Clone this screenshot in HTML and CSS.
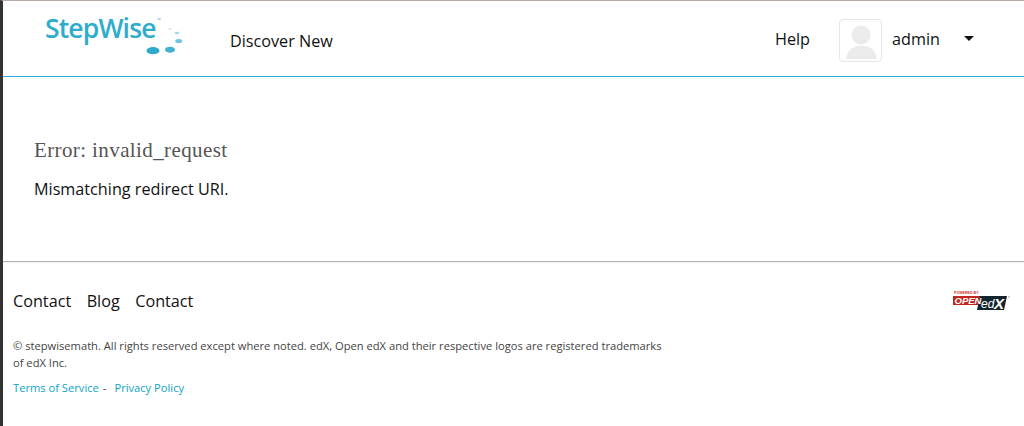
FILE: index.html
```html
<!DOCTYPE html>
<html lang="en">
<head>
<meta charset="utf-8">
<title>StepWise</title>
<link rel="stylesheet" href="styles.css">
</head>
<body>
<div class="page">
  <header class="site-header">
    <a class="logo" href="#">
      <span class="logo-text">StepWise</span><span class="logo-tm">™</span>
      <svg class="logo-dots" width="46" height="34" viewBox="0 0 46 34" aria-hidden="true">
        <ellipse cx="7" cy="23.700" rx="6.500" ry="3.600" fill="#2fa9c9"/>
        <ellipse cx="24" cy="22.700" rx="5" ry="3" fill="#3fb2cf"/>
        <ellipse cx="32.700" cy="14" rx="3.500" ry="2" fill="#6cc5da"/>
        <ellipse cx="31" cy="6" rx="2.300" ry="1.300" fill="#9ad8e6"/>
        <ellipse cx="24" cy="2" rx="1.500" ry="1" fill="#c8e9f1"/>
      </svg>
    </a>
    <nav class="main-nav"><a href="#">Discover New</a></nav>
    <div class="user-nav">
      <a class="help" href="#">Help</a>
      <span class="avatar">
        <svg width="41" height="41" viewBox="0 0 41 41" aria-hidden="true">
          <circle cx="21" cy="15" r="9.500" fill="#ebebeb"/>
          <path d="M6 39 C7 30 13 25.700 21.500 25.700 C30 25.700 36 30 37 39 Z" fill="#ebebeb"/>
        </svg>
      </span>
      <span class="username">admin</span>
      <span class="caret"></span>
    </div>
  </header>
  <main class="content">
    <h1 class="error-title">Error: invalid_request</h1>
    <p class="error-text">Mismatching redirect URI.</p>
  </main>
  <footer class="site-footer">
    <div class="footer-top">
      <nav class="footer-nav">
        <a href="#">Contact</a>
        <a href="#">Blog</a>
        <a href="#">Contact</a>
      </nav>
      <a class="openedx" href="#">
        <svg width="62" height="26" viewBox="0 0 62 26" role="img" aria-label="Powered by Open edX">
          <polygon points="3,9 31,9 29,18 3,18" fill="#c0281f"/>
          <polygon points="30,9 57,9 54,23 27,23" fill="#14242c"/>
          <text class="ox-powered" x="4" y="7">POWERED BY</text>
          <text class="ox-open" x="4.500" y="17">OPEN</text>
          <text class="ox-ed" x="31" y="20.500">ed</text>
          <text class="ox-x" x="44" y="21.500">X</text>
          <circle cx="59" cy="10" r="0.700" fill="#888"/>
        </svg>
      </a>
    </div>
    <p class="copyright">© stepwisemath. All rights reserved except where noted. edX, Open edX and their respective logos are registered trademarks of edX Inc.</p>
    <p class="legal"><a href="#">Terms of Service</a><span class="sep">-</span><a href="#">Privacy Policy</a></p>
  </footer>
</div>
</body>
</html>
```
FILE: styles.css
```css
* { box-sizing: border-box; }
html, body { margin: 0; height: 100%; background: #fff; }
body { font-family: "Open Sans", sans-serif; color: #000; overflow: hidden; }
a { color: inherit; text-decoration: none; }
.page { height: 426px; border-top: 1px solid #b5aaa5; border-left: 3px solid #333; }

.site-header { height: 76px; border-bottom: 1px solid #25b4d6; display: flex; align-items: flex-start; }
.logo { position: relative; width: 227px; flex: none; height: 60px; display: block; }
.logo-text { position: absolute; left: 42px; top: 9px; font-size: 26.500px; font-weight: 600; color: #2eaccd; line-height: 36px; letter-spacing: -0.85px; }
.logo-tm { position: absolute; left: 154px; top: 16px; font-size: 5px; line-height: 6px; color: #5ab; }
.logo-dots { position: absolute; left: 143px; top: 26px; }
.main-nav { margin-top: 29px; font-size: 16.200px; line-height: 22px; color: #111; }
.user-nav { margin-left: auto; height: 75px; display: flex; align-items: center; padding-right: 50px; font-size: 16.200px; color: #111; }
.help { margin-right: 29px; }
.avatar { width: 43px; height: 43px; margin-top: 4px; border: 1px solid #e6e6e6; border-radius: 4px; overflow: hidden; display: block; }
.avatar svg { display: block; }
.username { margin-left: 10px; width: 72px; }
.caret { width: 0; height: 0; border-left: 5px solid transparent; border-right: 5px solid transparent; border-top: 5px solid #111; }

.content { height: 185px; border-bottom: 1px solid #b5b5b5; box-shadow: 0 1px 0 #efefef; padding: 61px 31px 0; }
.error-title { margin: 0; font-family: "Liberation Serif", serif; font-weight: 400; font-size: 21px; line-height: 24px; letter-spacing: 0.39px; color: #555; }
.error-text { margin: 16px 0 0; font-size: 16.200px; line-height: 22px; color: #111; }

.site-footer { padding: 0 10px; }
.footer-top { height: 75px; display: flex; justify-content: space-between; align-items: flex-start; padding-top: 27px; }
.footer-nav { display: flex; gap: 15.500px; font-size: 16.200px; line-height: 24px; color: #111; }
.openedx { display: block; margin: -2px 2px 0 0; }
.openedx svg { display: block; }
.ox-powered { font-family: "Liberation Sans", sans-serif; font-size: 3.600px; font-weight: 700; fill: #c8372d; }
.ox-open { font-family: "Liberation Sans", sans-serif; font-size: 9.500px; font-weight: 700; font-style: italic; fill: #fff; }
.ox-ed { font-family: "Liberation Sans", sans-serif; font-size: 12px; font-style: italic; fill: #fff; }
.ox-x { font-family: "Liberation Sans", sans-serif; font-size: 15px; font-weight: 700; font-style: italic; fill: #fff; }
.copyright { margin: 0; width: 655px; font-size: 11.170px; line-height: 17px; color: #444; }
.legal { margin: 8px 0 0; font-size: 11.170px; line-height: 17px; color: #0ea5c9; }
.sep { color: #444; margin: 0 8px 0 4px; }
```
